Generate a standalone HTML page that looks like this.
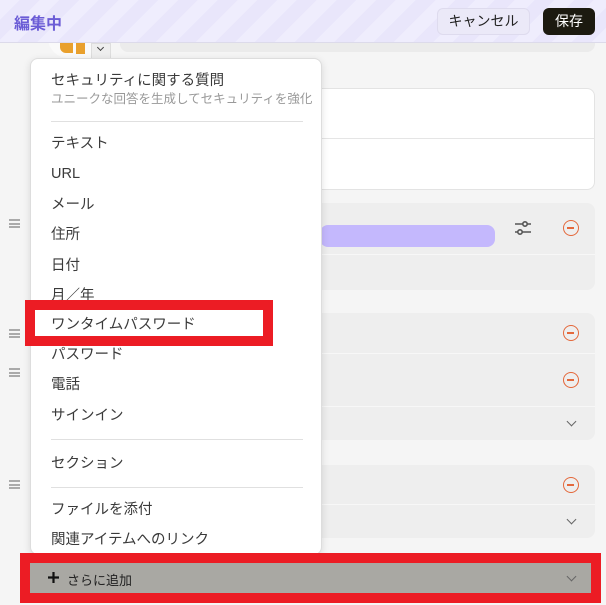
<!DOCTYPE html>
<html><head><meta charset="utf-8"><style>
*{box-sizing:border-box;margin:0;padding:0}
body{width:606px;height:605px;overflow:hidden;background:#f5f5f5;font-family:"Liberation Sans","Noto Sans CJK JP",sans-serif;position:relative;color:#333}
.hdr{position:absolute;left:0;top:0;width:606px;height:43px;background:repeating-linear-gradient(135deg,#efedfd 0 14px,#e9e6fb 14px 28px);border-bottom:1px solid #dcdaea;z-index:3}
.title{position:absolute;left:14px;top:10px;font-size:16px;font-weight:bold;color:#6b5cd6}
.cancel{position:absolute;left:437px;top:8px;width:93px;height:27px;border:1px solid #dedbee;border-radius:6px;background:#ebe9f8;font-size:14px;text-align:center;line-height:25px;color:#222}
.save{position:absolute;left:543px;top:8px;width:52px;height:27px;border-radius:6px;background:#1c1a10;color:#fff;font-size:14px;text-align:center;line-height:27px}
.card{position:absolute;left:120px;width:475px;border-radius:8px}
.div{position:absolute;left:0;right:0;height:1px;background:#f7f7f7}
.minus{position:absolute;width:16px;height:16px;border:1.5px solid #e4683b;border-radius:50%}
.minus:after{content:"";position:absolute;left:3px;top:6px;width:7px;height:2px;background:#e4683b}
.chev{position:absolute;width:7px;height:7px;border-right:1.5px solid #666;border-bottom:1.5px solid #666;transform:rotate(45deg)}
.ham{position:absolute;left:9px;width:11px;height:9px;border-top:2px solid #aaa;border-bottom:2px solid #aaa}
.ham:after{content:"";position:absolute;left:0;top:1.5px;width:11px;height:2px;background:#aaa}
.menu{position:absolute;left:30px;top:58px;width:292px;height:497px;background:#fff;border:1px solid #ddd;border-radius:8px;box-shadow:0 2px 8px rgba(0,0,0,.12);z-index:2}
.it{position:absolute;left:20px;font-size:14.5px;line-height:20px;color:#3a3a3a;white-space:nowrap}
.hr{position:absolute;left:20px;width:252px;height:1px;background:#e0e0e0}
.red1{position:absolute;left:25px;top:300px;width:248px;height:46px;border:10px solid #ec1c24;z-index:4}
.red2{position:absolute;left:20px;top:553px;width:581px;height:50px;border:10px solid #ec1c24;background:#a9a8a3;z-index:4}
</style></head><body>
<div class="hdr"><div class="title">編集中</div><div class="cancel">キャンセル</div><div class="save">保存</div></div>
<div style="position:absolute;left:48px;top:30px;width:64px;height:28px;background:#fafafa;border-radius:0 0 20px 20px"></div>
<div style="position:absolute;left:60px;top:43px;width:13px;height:10px;background:#e9a02d;border-radius:0 0 0 6px"></div>
<div style="position:absolute;left:76px;top:43px;width:9px;height:11px;background:#e9a02d"></div>
<div style="position:absolute;left:91px;top:43px;width:20px;height:17px;background:#eee;border:1px solid #ddd"></div>
<div class="chev" style="left:98px;top:45px;width:5px;height:5px;border-color:#444"></div>
<div style="position:absolute;left:120px;top:40px;width:475px;height:12px;background:#ebebeb;border-radius:0 0 8px 8px"></div>

<div class="card" style="top:88px;height:102px;background:#fff;border:1px solid #e3e3e3"><div class="div" style="top:49px;background:#e5e5e5"></div></div>
<div class="card" style="top:203px;height:87px;background:#eee"><div class="div" style="top:51px"></div></div>
<div style="position:absolute;left:320px;top:225px;width:175px;height:22px;background:#c4b8fd;border-radius:8px"></div>
<svg style="position:absolute;left:514px;top:219px" width="18" height="18" viewBox="0 0 18 18" fill="none" stroke="#555" stroke-width="1.6"><path d="M1 5h16M1 13h16"/><circle cx="11" cy="5" r="2.2" fill="#eee"/><circle cx="6" cy="13" r="2.2" fill="#eee"/></svg>
<div class="minus" style="left:563px;top:220px"></div>
<div class="card" style="top:313px;height:127px;background:#eee"><div class="div" style="top:40px"></div><div class="div" style="top:93px"></div></div>
<div class="minus" style="left:563px;top:325px"></div>
<div class="minus" style="left:563px;top:372px"></div>
<div class="chev" style="left:568px;top:418px"></div>
<div class="card" style="top:465px;height:73px;background:#eee"><div class="div" style="top:39px"></div></div>
<div class="minus" style="left:563px;top:477px"></div>
<div class="chev" style="left:568px;top:516px"></div>
<div class="ham" style="top:219px"></div>
<div class="ham" style="top:329px"></div>
<div class="ham" style="top:368px"></div>
<div class="ham" style="top:480px"></div>

<div class="menu">
<div class="it" style="top:12px">セキュリティに関する質問</div>
<div class="it" style="top:30px;font-size:12.5px;color:#999">ユニークな回答を生成してセキュリティを強化</div>
<div class="hr" style="top:62px"></div>
<div class="it" style="top:75px">テキスト</div>
<div class="it" style="top:105px">URL</div>
<div class="it" style="top:136px">メール</div>
<div class="it" style="top:166px">住所</div>
<div class="it" style="top:197px">日付</div>
<div class="it" style="top:227px">月／年</div>
<div class="it" style="top:256px">ワンタイムパスワード</div>
<div class="it" style="top:286px">パスワード</div>
<div class="it" style="top:316px">電話</div>
<div class="it" style="top:347px">サインイン</div>
<div class="hr" style="top:380px"></div>
<div class="it" style="top:395px">セクション</div>
<div class="hr" style="top:428px"></div>
<div class="it" style="top:441px">ファイルを添付</div>
<div class="it" style="top:471px">関連アイテムへのリンク</div>
</div>
<div class="red1"></div>
<div class="red2">
<svg style="position:absolute;left:18px;top:9px" width="11" height="11" viewBox="0 0 11 11"><path d="M5.5 0v11M0 5.5h11" stroke="#111" stroke-width="2.2"/></svg>
<div style="position:absolute;left:37px;top:7px;font-size:13px;color:#222">さらに追加</div>
<div class="chev" style="left:538px;top:10px"></div>
</div>
</body></html>
